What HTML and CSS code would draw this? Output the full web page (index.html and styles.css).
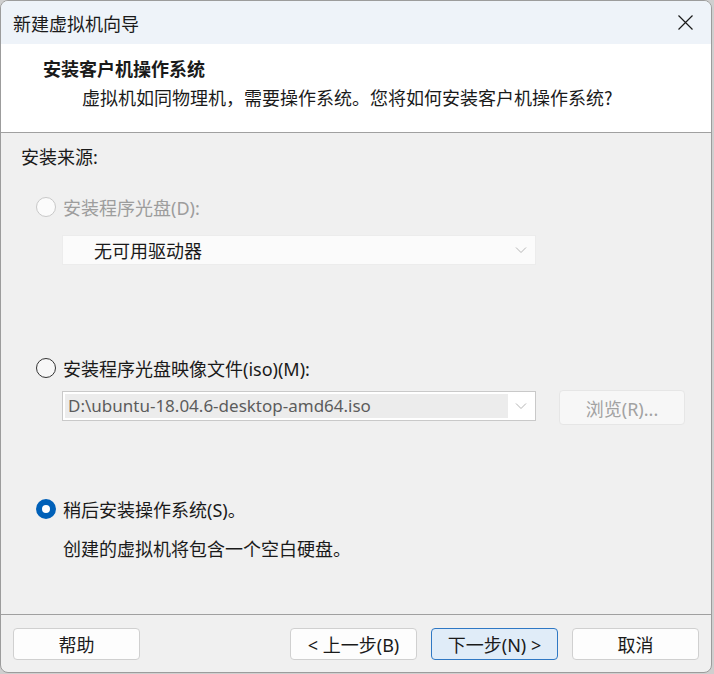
FILE: index.html
```html
<!DOCTYPE html>
<html lang="zh-CN">
<head>
    <meta charset="UTF-8">
    <meta name="viewport" content="width=device-width, initial-scale=1.0">
    <title>新建虚拟机向导</title>
    <link rel="stylesheet" href="styles.css">
</head>
<body>
    <div class="window">
        <div class="titlebar">
            <span class="title-text">新建虚拟机向导</span>
            <svg class="close" width="17" height="17" viewBox="0 0 17 17">
                <path d="M1.5 1.5 L15.5 15.5 M15.5 1.5 L1.5 15.5" stroke="#1a1a1a" stroke-width="1.2" fill="none"/>
            </svg>
        </div>

        <div class="header">
            <div class="header-title">安装客户机操作系统</div>
            <div class="header-sub">虚拟机如同物理机，需要操作系统。您将如何安装客户机操作系统?</div>
        </div>

        <div class="content">
            <div class="section-label">安装来源:</div>

            <div class="option disabled option-first">
                <span class="radio"></span>
                <span>安装程序光盘(D):</span>
            </div>
            <div class="select select-disabled">
                <span class="select-text">无可用驱动器</span>
                <svg class="chevron" width="12" height="8" viewBox="0 0 12 8">
                    <path d="M1 1.5 L6 6.5 L11 1.5" stroke="#b5b5b5" stroke-width="1" fill="none"/>
                </svg>
            </div>

            <div class="option option-iso">
                <span class="radio"></span>
                <span>安装程序光盘映像文件(iso)(M):</span>
            </div>
            <div class="iso-row">
                <div class="select combo">
                    <span class="combo-text">D:\ubuntu-18.04.6-desktop-amd64.iso</span>
                    <svg class="chevron" width="12" height="8" viewBox="0 0 12 8">
                        <path d="M1 1.5 L6 6.5 L11 1.5" stroke="#b5b5b5" stroke-width="1" fill="none"/>
                    </svg>
                </div>
                <button class="btn browse" disabled>浏览(R)...</button>
            </div>

            <div class="option option-later">
                <span class="radio checked"></span>
                <span>稍后安装操作系统(S)。</span>
            </div>
            <div class="note">创建的虚拟机将包含一个空白硬盘。</div>
        </div>

        <div class="footer">
            <button class="btn">帮助</button>
            <div class="footer-right">
                <button class="btn">&lt; 上一步(B)</button>
                <button class="btn primary">下一步(N) &gt;</button>
                <button class="btn">取消</button>
            </div>
        </div>
    </div>
</body>
</html>
```

FILE: styles.css
```css
body {
    margin: 0;
    background-color: #cfcfcf;
    font-family: "Noto Sans", "Noto Sans CJK SC", sans-serif;
    font-size: 18px;
    color: #1a1a1a;
}
.window {
    width: 712px;
    height: 673px;
    box-sizing: border-box;
    border: 1px solid #9c9c9c;
    border-radius: 8px;
    overflow: hidden;
    background-color: #f0f0f0;
    display: flex;
    flex-direction: column;
}
.titlebar {
    height: 43px;
    flex-shrink: 0;
    background-color: #eef3f9;
    display: flex;
    align-items: center;
    justify-content: space-between;
    padding: 0 17px 0 12px;
}
.title-text {
    font-family: "Noto Sans CJK SC", sans-serif;
    font-size: 18px;
}
.header {
    flex-shrink: 0;
    background-color: #fff;
    border-bottom: 1px solid #a0a0a0;
    padding: 12px 0 0 42px;
    box-sizing: border-box;
    height: 89px;
}
.header-title {
    font-family: "Noto Sans CJK SC", sans-serif;
    font-weight: bold;
    font-size: 18px;
    line-height: 24px;
}
.header-sub {
    font-family: "Noto Sans CJK SC", sans-serif;
    font-size: 18px;
    line-height: 24px;
    margin-top: 5px;
    padding-left: 39px;
}
.content {
    flex: 1;
    padding: 12px 0 0 20px;
}
.section-label {
    line-height: 24px;
}
.option {
    display: flex;
    align-items: center;
    gap: 7px;
    height: 24px;
    margin-left: 15px;
}
.option-first {
    margin-top: 26px;
}
.option-iso {
    margin-top: 91px;
}
.option-later {
    margin-top: 72px;
}
.option.disabled {
    color: #9d9d9d;
}
.radio {
    width: 18px;
    height: 18px;
    border: 1px solid #333;
    border-radius: 50%;
    background-color: #f7f7f7;
    flex-shrink: 0;
    box-sizing: content-box;
}
.option.disabled .radio {
    border-color: #c8c8c8;
    background-color: #fbfbfb;
}
.radio.checked {
    width: 8px;
    height: 8px;
    border: 6px solid #0060b8;
    background-color: #fff;
}
.select {
    width: 474px;
    height: 30px;
    box-sizing: border-box;
    margin-left: 41px;
    display: flex;
    align-items: center;
    justify-content: space-between;
    padding-right: 8px;
}
.select-disabled {
    margin-top: 16px;
    background-color: #fbfbfb;
    border: 1px solid #ececec;
}
.select-text {
    padding-left: 31px;
}
.iso-row {
    display: flex;
    align-items: flex-start;
    gap: 23px;
    margin-top: 10px;
}
.combo {
    margin-top: 1px;
    background-color: #fff;
    border: 1px solid #c9c9c9;
    padding-left: 2px;
}
.combo-text {
    width: 443px;
    height: 24px;
    line-height: 24px;
    font-size: 17px;
    background-color: #ececec;
    color: #5c5c5c;
    padding-left: 3px;
    box-sizing: border-box;
}
.note {
    margin-top: 16px;
    margin-left: 42px;
    line-height: 24px;
}
.footer {
    height: 58px;
    flex-shrink: 0;
    box-sizing: border-box;
    border-top: 1px solid #a0a0a0;
    padding: 13px 12px 0 12px;
    display: flex;
    justify-content: space-between;
    align-items: flex-start;
}
.footer-right {
    display: flex;
    gap: 14px;
}
.btn {
    width: 127px;
    height: 32px;
    background-color: #fdfdfd;
    border: 1px solid #d0d0d0;
    border-radius: 4px;
    font-family: "Noto Sans", "Noto Sans CJK SC", sans-serif;
    font-size: 18px;
    color: #1a1a1a;
    padding: 0;
}
.btn.primary {
    background-color: #e0ecf8;
    border-color: #2f78c4;
}
.browse {
    height: 35px;
    width: 126px;
    background-color: #f7f7f7;
    border-color: #e6e6e6;
    color: #a2a2a2;
}
```
